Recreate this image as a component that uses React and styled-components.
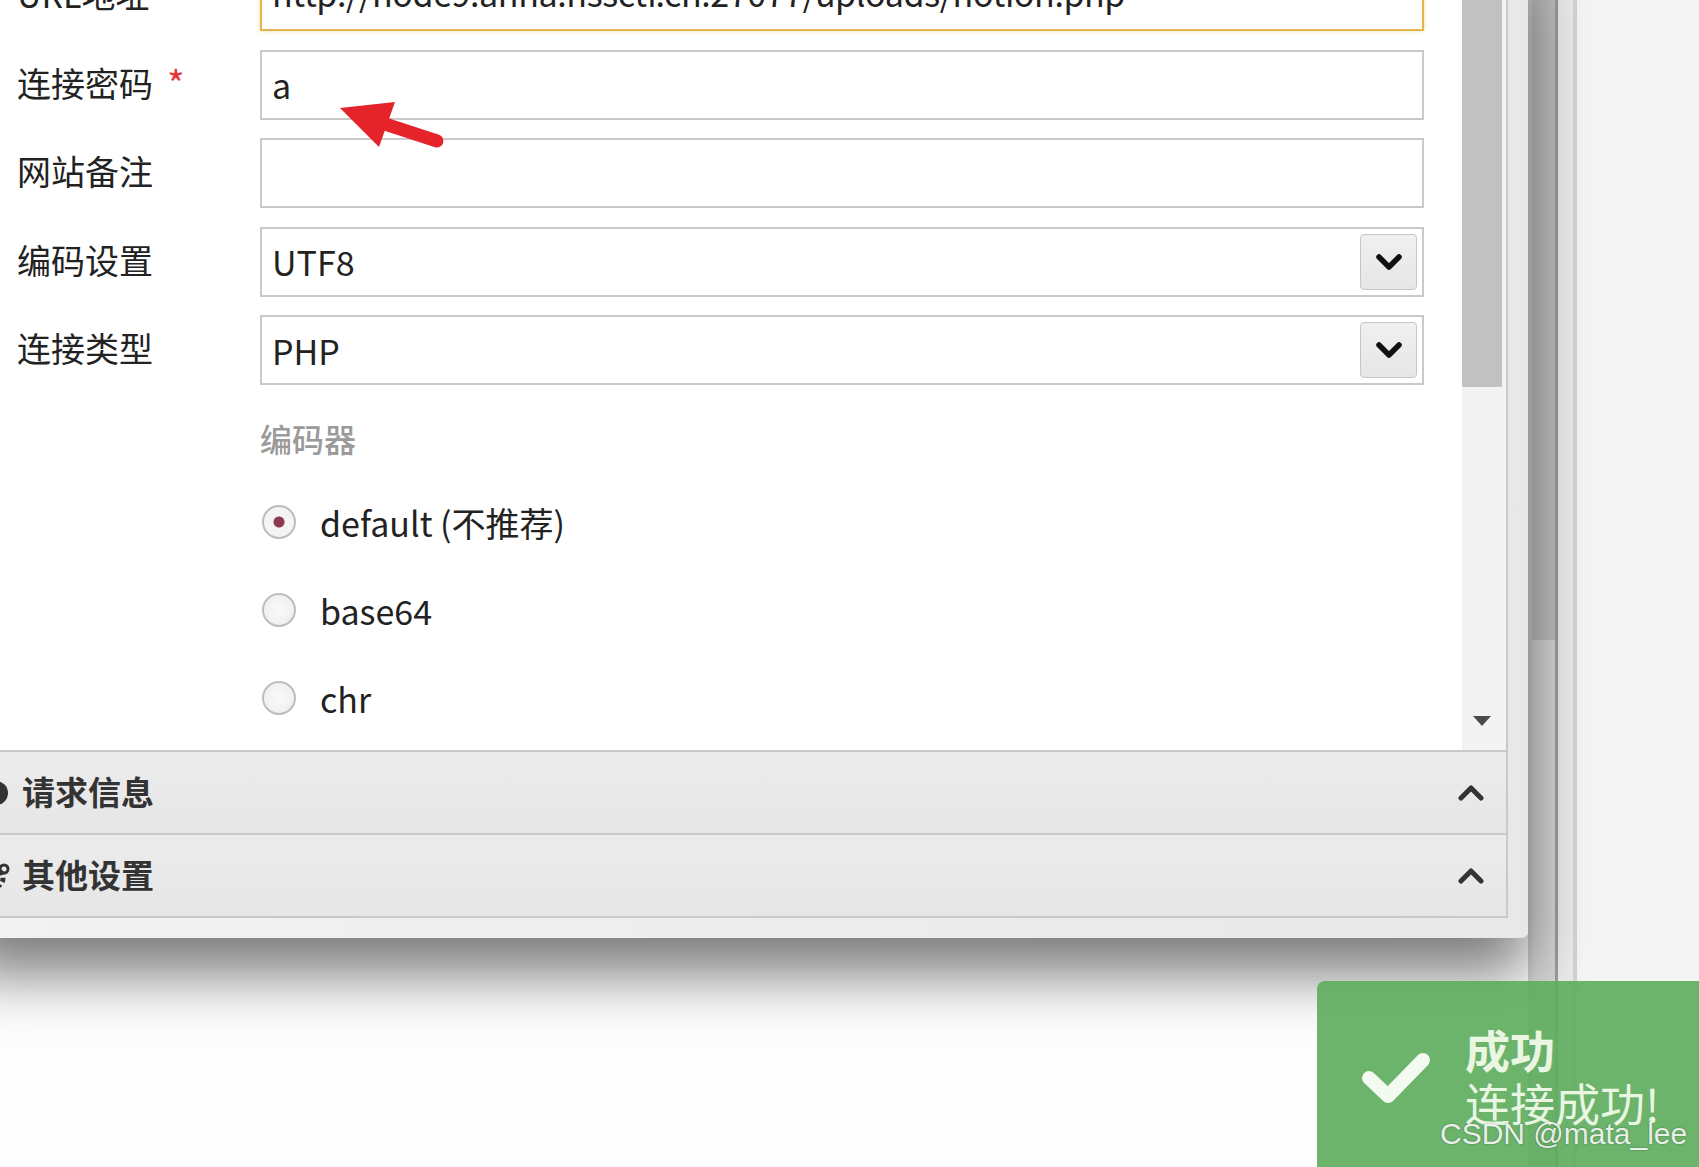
import React from "react";
import styled, { createGlobalStyle } from "styled-components";

const GlobalStyle = createGlobalStyle`
  html, body {
    margin: 0;
    padding: 0;
    background: #fdfdfd;
  }
  body {
    overflow: hidden;
    font-family: "Noto Sans CJK SC", "Noto Sans", sans-serif;
  }
`;

const Screen = styled.div`
  position: relative;
  display: flex;
  width: 1699px;
  height: 1167px;
  overflow: hidden;
  background: #fdfdfd;
`;

const Stage = styled.div`
  flex: 0 0 1528px;
  position: relative;
  z-index: 2;
`;

const Dialog = styled.div`
  margin: -60px 0 0 -40px;
  width: 1568px;
  box-sizing: border-box;
  padding: 0 20px 20px 0;
  background: linear-gradient(90deg, #f2f2f2, #e8e8e8);
  border-bottom-right-radius: 7px;
  box-shadow: 0 36px 60px rgba(0, 0, 0, 0.52);
`;

const Panel = styled.div`
  display: flex;
  flex-direction: column;
  background: #fff;
  border-right: 2px solid #c9c9c9;
  border-bottom: 2px solid #c9c9c9;
`;

const FormArea = styled.div`
  display: flex;
  height: 810px;
`;

const FormBody = styled.div`
  flex: 1;
  display: flex;
  flex-direction: column;
  gap: 18.5px;
  padding: 21px 38px 0 57px;
`;

const FieldRow = styled.div`
  display: grid;
  grid-template-columns: 243px 1fr;
  align-items: center;
  height: 70px;
`;

const Label = styled.div`
  display: flex;
  align-items: center;
  font-size: 34px;
  color: #222;
  margin-top: -5px;
`;

const Required = styled.span`
  color: #e5343c;
  font-size: 38px;
  line-height: 1;
  margin-left: 14px;
  margin-top: 2px;
`;

const Field = styled.div`
  box-sizing: border-box;
  height: 70px;
  display: flex;
  align-items: center;
  justify-content: space-between;
  padding: 0 5px ${(p) => (p.$focused ? "8px" : "0")} 10px;
  border: 2px solid ${(p) => (p.$focused ? "#e2b64c" : "#c9c9c9")};
  box-shadow: ${(p) => (p.$focused ? "0 0 4px rgba(226, 182, 76, 0.5)" : "none")};
  background: #fff;
  font-size: 34px;
  letter-spacing: ${(p) => (p.$focused ? "-0.4px" : "0")};
  color: #222;
  white-space: nowrap;
  overflow: hidden;
`;

const DropButton = styled.div`
  flex: 0 0 auto;
  width: 57px;
  height: 56px;
  box-sizing: border-box;
  display: flex;
  align-items: center;
  justify-content: center;
  border: 1px solid #c6c6c6;
  border-radius: 4px;
  background: linear-gradient(#f0f0f0, #e6e6e6);
`;

const EncoderBlock = styled.div`
  padding-left: 243px;
  margin-top: 14.5px;
`;

const EncoderTitle = styled.div`
  font-size: 32px;
  line-height: 40px;
  font-weight: 500;
  color: #9a9a9a;
`;

const RadioList = styled.div`
  margin-top: 20px;
  display: flex;
  flex-direction: column;
`;

const RadioItem = styled.div`
  height: 88px;
  display: flex;
  align-items: center;
  gap: 24px;
  font-size: 34px;
  color: #222;
`;

const RadioDot = styled.span`
  width: 34px;
  height: 34px;
  margin-left: 2px;
  box-sizing: border-box;
  border-radius: 50%;
  border: 2px solid #bdbdbd;
  background: radial-gradient(circle, ${(p) => (p.$checked ? "#8c3a52 0 5px, #f4f4f4 6px" : "#fafafa 0, #ececec 100%")});
`;

const VScroll = styled.div`
  flex: 0 0 44px;
  box-sizing: border-box;
  padding-right: 4px;
  display: flex;
  flex-direction: column;
  background: #f3f3f3;
`;

const Thumb = styled.div`
  height: 447px;
  background: #c1c1c1;
`;

const Track = styled.div`
  flex: 1;
  display: flex;
  align-items: flex-end;
  justify-content: center;
  padding-bottom: 23px;
`;

const AccHeader = styled.div`
  height: 83px;
  box-sizing: border-box;
  display: flex;
  align-items: center;
  gap: 12px;
  padding: 0 22px 0 22px;
  border-top: 2px solid #c9c9c9;
  background: linear-gradient(#ececec, #e6e6e6);
`;

const AccTitle = styled.span`
  flex: 1;
  font-size: 33px;
  font-weight: 700;
  color: #333;
  margin-top: -4px;
`;

const Gutter = styled.div`
  flex: 0 0 49px;
  display: grid;
  grid-template-columns: 4px 23px 3px 15px 4px;
`;

const Strip = styled.div`
  background: ${(p) => p.$bg};
`;

const RightPane = styled.div`
  flex: 1;
  background: #f5f5f5;
`;

const Toast = styled.div`
  position: absolute;
  left: 1317px;
  top: 981px;
  right: 0;
  bottom: 0;
  z-index: 3;
  display: flex;
  align-items: flex-start;
  gap: 35px;
  padding: 42px 0 0 45px;
  background: rgba(96, 172, 96, 0.92);
  border-top-left-radius: 8px;
`;

const ToastText = styled.div`
  display: flex;
  flex-direction: column;
  font-size: 45px;
  line-height: 53px;
  color: #e8f6e2;
`;

const ToastTitle = styled.span`
  font-weight: 700;
`;

const Watermark = styled.div`
  position: absolute;
  left: 1440px;
  top: 1116px;
  z-index: 4;
  font-family: "Liberation Sans", Arial, sans-serif;
  font-size: 30px;
  line-height: 36px;
  color: rgba(255, 255, 255, 0.88);
  text-shadow: 0 0 2px rgba(0, 0, 0, 0.35);
  white-space: nowrap;
`;

const Annotation = styled.svg`
  position: absolute;
  left: 330px;
  top: 95px;
  z-index: 5;
`;

const ChevronDown = () => (
  <svg width="28" height="20" viewBox="0 0 28 20">
    <polyline points="4,5 14,15 24,5" fill="none" stroke="#111" strokeWidth="5.5" strokeLinecap="round" strokeLinejoin="round" />
  </svg>
);

const ChevronUp = () => (
  <svg width="26" height="18" viewBox="0 0 26 18">
    <polyline points="3,14 13,4 23,14" fill="none" stroke="#333" strokeWidth="5" strokeLinecap="round" strokeLinejoin="round" />
  </svg>
);

const GlobeIcon = () => (
  <svg width="28" height="28" viewBox="0 0 28 28">
    <circle cx="14" cy="14" r="12" fill="#333" />
    <circle cx="14" cy="11" r="4" fill="#e8e8e8" />
  </svg>
);

const CogIcon = () => (
  <svg width="28" height="28" viewBox="0 0 28 28">
    <circle cx="12" cy="16" r="9" fill="none" stroke="#333" strokeWidth="5" strokeDasharray="4 3" />
    <circle cx="22" cy="7" r="4" fill="none" stroke="#333" strokeWidth="3" />
  </svg>
);

const fields = [
  { label: "URL地址", value: "http://node9.anna.nssctf.cn:27077/uploads/notion.php", focused: true },
  { label: "连接密码", value: "a", required: true },
  { label: "网站备注", value: "" },
  { label: "编码设置", value: "UTF8", select: true },
  { label: "连接类型", value: "PHP", select: true },
];

const encoders = [
  { name: "default (不推荐)", checked: true },
  { name: "base64" },
  { name: "chr" },
];

export default function App() {
  return (
    <>
      <GlobalStyle />
      <Screen>
        <Stage>
          <Dialog>
            <Panel>
              <FormArea>
                <FormBody>
                  {fields.map((f) => (
                    <FieldRow key={f.label}>
                      <Label>
                        {f.label}
                        {f.required && <Required>*</Required>}
                      </Label>
                      <Field $focused={f.focused}>
                        <span>{f.value}</span>
                        {f.select && (
                          <DropButton>
                            <ChevronDown />
                          </DropButton>
                        )}
                      </Field>
                    </FieldRow>
                  ))}
                  <EncoderBlock>
                    <EncoderTitle>编码器</EncoderTitle>
                    <RadioList>
                      {encoders.map((e) => (
                        <RadioItem key={e.name}>
                          <RadioDot $checked={e.checked} />
                          {e.name}
                        </RadioItem>
                      ))}
                    </RadioList>
                  </EncoderBlock>
                </FormBody>
                <VScroll>
                  <Thumb />
                  <Track>
                    <svg width="20" height="12" viewBox="0 0 20 12">
                      <polygon points="1,1 19,1 10,11" fill="#4a4a4a" />
                    </svg>
                  </Track>
                </VScroll>
              </FormArea>
              <AccHeader>
                <GlobeIcon />
                <AccTitle>请求信息</AccTitle>
                <ChevronUp />
              </AccHeader>
              <AccHeader>
                <CogIcon />
                <AccTitle>其他设置</AccTitle>
                <ChevronUp />
              </AccHeader>
            </Panel>
          </Dialog>
        </Stage>
        <Gutter>
          <Strip $bg="#cfcfcf" />
          <Strip $bg="linear-gradient(#bfbfbf 0 640px, #d6d6d6 640px)" />
          <Strip $bg="#9c9c9c" />
          <Strip $bg="#ebebeb" />
          <Strip $bg="#d3d3d3" />
        </Gutter>
        <RightPane />
        <Toast>
          <svg width="68" height="51" viewBox="0 0 68 51" style={{ marginTop: 29 }}>
            <polyline points="7,26 26,44 61,8" fill="none" stroke="#f3faf0" strokeWidth="14" strokeLinecap="round" strokeLinejoin="round" />
          </svg>
          <ToastText>
            <ToastTitle>成功</ToastTitle>
            <span>连接成功!</span>
          </ToastText>
        </Toast>
        <Watermark>CSDN @mata_lee</Watermark>
        <Annotation width="120" height="60" viewBox="0 0 120 60">
          <polygon points="10,13 65,7 49,52" fill="#e5232b" />
          <line x1="55" y1="29" x2="107" y2="46" stroke="#e5232b" strokeWidth="13" strokeLinecap="round" />
        </Annotation>
      </Screen>
    </>
  );
}
